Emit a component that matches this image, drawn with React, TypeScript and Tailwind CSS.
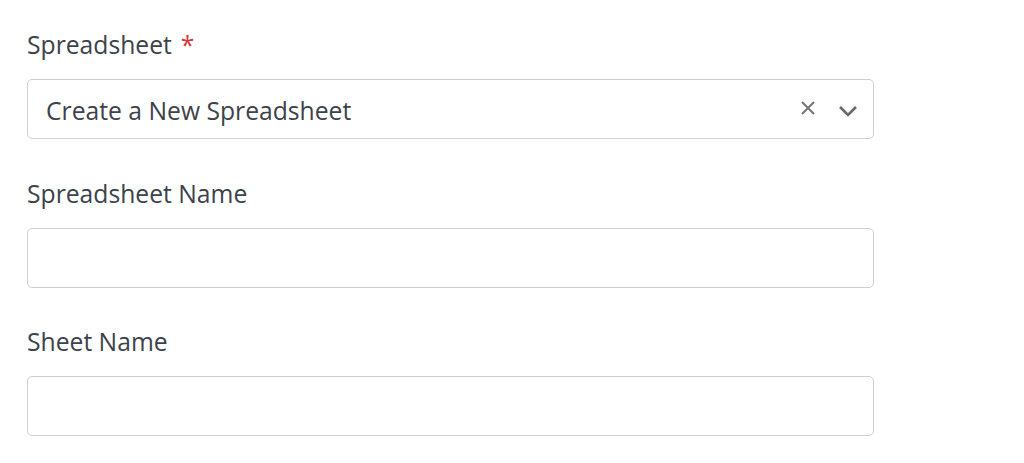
import React from "react";

function Field({ label, required, children }: { label: string; required?: boolean; children: React.ReactNode }) {
  return (
    <div className="flex flex-col">
      <label className="text-[24.7px] leading-[32px] text-[#3c434a] h-[32px]">
        {label}
        {required && <span className="text-[#d63638] ml-[9px]">*</span>}
      </label>
      {children}
    </div>
  );
}

export default function App() {
  return (
    <div
      className="w-[1024px] h-[463px] bg-white pl-[27px] pt-[29px]"
      style={{ fontFamily: '"Open Sans", "Noto Sans", sans-serif' }}
    >
      <div className="w-[847px] flex flex-col gap-[38.5px]">
        <Field label="Spreadsheet" required>
          <div className="mt-[18px] h-[60px] border border-[#cfcfcf] rounded-[5px] flex items-center pl-[18px] pr-[15px]">
            <span className="flex-1 text-[24.7px] text-[#3c434a] pt-[3px]">Create a New Spreadsheet</span>
            <svg width="16" height="16" viewBox="0 0 16 16" className="mr-[22px] mb-[3px]">
              <path d="M2 2 L14 14 M14 2 L2 14" stroke="#757575" strokeWidth="2" fill="none" />
            </svg>
            <svg width="20" height="12" viewBox="0 0 20 12" className="mt-[3px]">
              <path d="M2 2 L10 10 L18 2" stroke="#646970" strokeWidth="2.6" fill="none" />
            </svg>
          </div>
        </Field>
        <Field label="Spreadsheet Name">
          <div className="mt-[18px] h-[60px] border border-[#cfcfcf] rounded-[5px]" />
        </Field>
        <Field label="Sheet Name">
          <div className="mt-[18px] h-[60px] border border-[#cfcfcf] rounded-[5px]" />
        </Field>
      </div>
    </div>
  );
}
